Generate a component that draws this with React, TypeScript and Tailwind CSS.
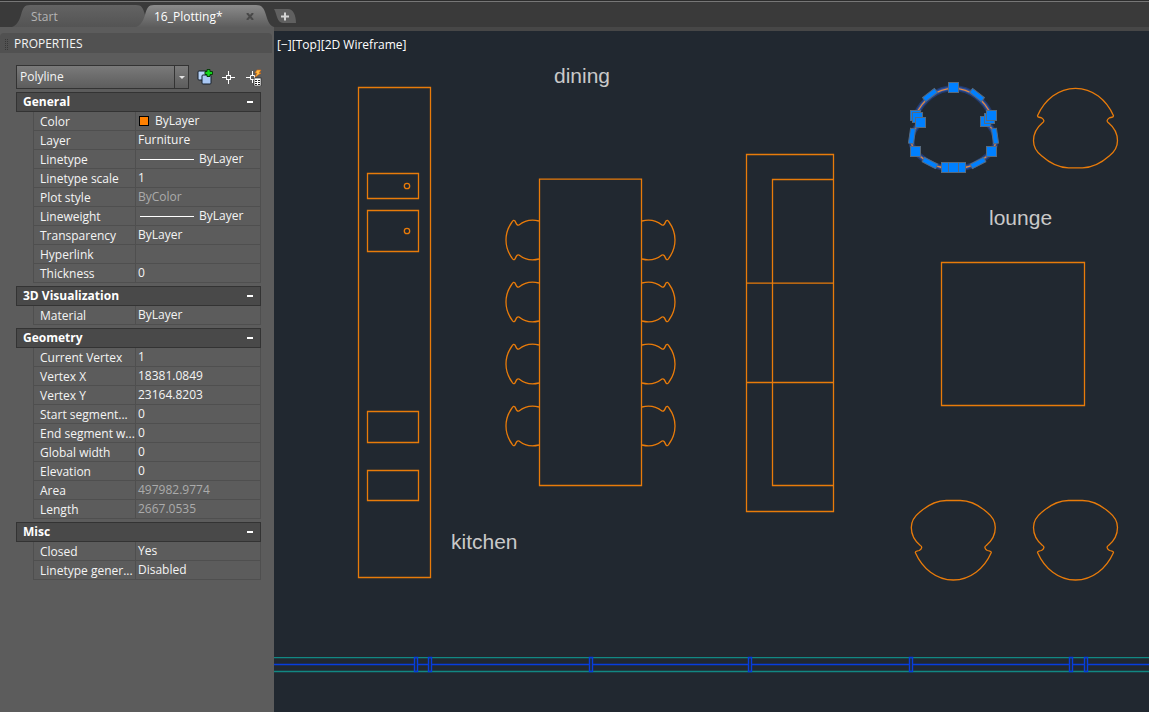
import React from "react";

type Row = { label: string; value: string; muted?: boolean; kind?: "swatch" | "line" };
type Group = { title: string; rows: Row[] };

const groups: Group[] = [
  {
    title: "General",
    rows: [
      { label: "Color", value: "ByLayer", kind: "swatch" },
      { label: "Layer", value: "Furniture" },
      { label: "Linetype", value: "ByLayer", kind: "line" },
      { label: "Linetype scale", value: "1" },
      { label: "Plot style", value: "ByColor", muted: true },
      { label: "Lineweight", value: "ByLayer", kind: "line" },
      { label: "Transparency", value: "ByLayer" },
      { label: "Hyperlink", value: "" },
      { label: "Thickness", value: "0" },
    ],
  },
  { title: "3D Visualization", rows: [{ label: "Material", value: "ByLayer" }] },
  {
    title: "Geometry",
    rows: [
      { label: "Current Vertex", value: "1" },
      { label: "Vertex X", value: "18381.0849" },
      { label: "Vertex Y", value: "23164.8203" },
      { label: "Start segment...", value: "0" },
      { label: "End segment w...", value: "0" },
      { label: "Global width", value: "0" },
      { label: "Elevation", value: "0" },
      { label: "Area", value: "497982.9774", muted: true },
      { label: "Length", value: "2667.0535", muted: true },
    ],
  },
  {
    title: "Misc",
    rows: [
      { label: "Closed", value: "Yes" },
      { label: "Linetype gener...", value: "Disabled" },
    ],
  },
];

function TabBar() {
  return (
    <header className="flex h-[27px] items-end border-t border-[#2c2c2c] bg-[#3a3a3a] shadow-[inset_0_1px_0_#777777]">
      <nav className="flex items-end pl-3" aria-label="Drawings">
        <div className="relative h-[23px] w-[132px]">
          <svg className="absolute inset-0" width="140" height="23" viewBox="0 0 140 23" aria-hidden="true">
            <defs>
              <linearGradient id="tabIdle" x1="0" y1="0" x2="0" y2="1">
                <stop offset="0" stopColor="#636363" />
                <stop offset="1" stopColor="#545454" />
              </linearGradient>
            </defs>
            <path d="M0 23C5 21 7 17 9 11C11 4 12 1 18 1H124C130 1 131 4 133 11C135 17 137 21 140 23Z" fill="url(#tabIdle)" />
          </svg>
          <a href="#start" className="relative flex h-full items-center pl-[19px] pt-[2px] text-[#b4b4b4]">Start</a>
        </div>
        <div className="relative h-[23px] w-[130px]">
          <svg className="absolute inset-0 overflow-visible" width="130" height="23" viewBox="0 0 130 23" aria-hidden="true">
            <defs>
              <linearGradient id="tabActive" x1="0" y1="0" x2="0" y2="1">
                <stop offset="0" stopColor="#8b8b8b" />
                <stop offset="1" stopColor="#5d5d5d" />
              </linearGradient>
            </defs>
            <path d="M-8 23C-3 21 -1 17 1 11C3 4 4 1 10 1H112C118 1 120 4 122 11C124 17 125 21 130 23Z" fill="url(#tabActive)" />
          </svg>
          <div className="relative flex h-full items-center pl-[10px] pr-4 pt-[2px] text-white">
            <a href="#plotting" className="flex-1">16_Plotting*</a>
            <button aria-label="Close tab" className="flex h-4 w-4 items-center justify-center">
              <svg width="8" height="7" viewBox="0 0 8 7"><path d="M1 0L7 7M7 0L1 7" stroke="#484848" strokeWidth="2" /></svg>
            </button>
          </div>
        </div>
      </nav>
      <button aria-label="New tab" className="mb-[3px]">
        <svg width="23" height="15" viewBox="0 0 23 15">
          <path d="M0 0H14C19 0 22 6 22 14H9C3 14 3 5 0 0Z" fill="#606060" />
          <path d="M7 7.500H15M11 3.500V11.500" stroke="#d4d4d4" strokeWidth="2" />
        </svg>
      </button>
    </header>
  );
}

function Toolbar() {
  return (
    <div className="flex h-6 items-center">
      <div className="relative flex h-6 w-[173px] shrink-0">
        <select
          aria-label="Object type"
          className="h-6 w-full appearance-none border border-[#333333] bg-linear-to-b from-[#7a7a7a] to-[#5d5d5d] pl-[3px] text-[#f4f4f4]"
        >
          <option>Polyline</option>
        </select>
        <svg className="pointer-events-none absolute right-0 top-0" width="15" height="24" viewBox="0 0 15 24" aria-hidden="true">
          <path d="M.5 0V24" stroke="#333333" />
          <path d="M5 11H11L8 14Z" fill="#e4e4e4" />
        </svg>
      </div>
      <button aria-label="Toggle PICKADD" className="ml-2 shrink-0">
        <svg width="16" height="16" viewBox="0 0 16 16">
          <rect x="1" y="2" width="9" height="9" rx="1" fill="#b8d4fa" stroke="#17202c" />
          <rect x="5" y="6" width="9" height="9" rx="1" fill="#a9c8f4" stroke="#17202c" />
          <path d="M10 .5H13V2.500H15.500V5.500H13V7.500H10V5.500H8V2.500H10Z" fill="#12d51d" stroke="#073e09" />
        </svg>
      </button>
      <button aria-label="Select objects" className="ml-2 shrink-0">
        <svg width="16" height="16" viewBox="0 0 16 16" fill="none" stroke="#ffffff" shapeRendering="crispEdges">
          <path d="M1 8.500H6M10 8.500H14M7.500 2V6M7.500 11V15" />
          <rect x="5.500" y="6.500" width="4" height="4" />
        </svg>
      </button>
      <button aria-label="Quick select" className="ml-2 shrink-0">
        <svg width="18" height="18" viewBox="0 0 18 18" fill="none">
          <path d="M1 9.500H6M7.500 3V7M7.500 12V15M5.500 7.500H9.500V11.500H5.500Z" stroke="#fff" />
          <path d="M12 2H16L14 5H16L10 9L12 5H10Z" fill="#ffbc45" stroke="#de6a0c" strokeWidth=".6" />
          <rect x="9" y="10" width="7" height="8" fill="#fff" stroke="#292929" strokeWidth=".7" />
          <path d="M10 12.500H12M13 12.500H15M10 14.500H12M13 14.500H15M10 16.500H12M13 16.500H15" stroke="#222" />
        </svg>
      </button>
    </div>
  );
}

function PropertyGroup({ group }: { group: Group }) {
  return (
    <section className="pb-[3px]">
      <h2>
        <button className="flex h-5 w-full items-center justify-between border border-[#333333] bg-[#494949] pl-[6px] pr-[7px] font-bold text-white">
          <span>{group.title}</span>
          <span className="h-[2px] w-[6px] bg-white" />
        </button>
      </h2>
      <table className="ml-[17px] w-[228px] table-fixed border-separate border-spacing-0">
        <tbody>
          {group.rows.map((row) => (
            <tr key={row.label}>
              <th scope="row" className="w-[102px] whitespace-nowrap border-b border-l border-[#4f4f4f] p-0 pl-[6px] text-left font-normal">
                <div className="flex h-[18px] items-center pt-[2px]">{row.label}</div>
              </th>
              <td className={row.muted ? "border-x border-b border-[#4f4f4f] p-0 pl-[2px] text-[#ababab]" : "border-x border-b border-[#4f4f4f] p-0 pl-[2px]"}>
                <div className="flex h-[18px] items-center">
                  {row.kind === "swatch" && <span className="ml-[1px] mr-[6px] h-[10px] w-[10px] border border-black bg-[#ff8000]" />}
                  {row.kind === "line" && <span className="ml-[2px] mr-[5px] h-px w-[54px] bg-white" />}
                  {row.value}
                </div>
              </td>
            </tr>
          ))}
        </tbody>
      </table>
    </section>
  );
}

function PropertiesPanel() {
  return (
    <aside className="w-[274px] shrink-0 bg-[#5c5c5c] pt-[6px] text-[#f4f4f4]">
      <div className="mr-[2px] flex h-5 items-center rounded-t bg-[#515151] pl-[5px] pt-[2px]">
        <svg width="3" height="11" viewBox="0 0 3 11" aria-hidden="true">
          <path d="M.5 0V11M2.500 0V11" stroke="#383838" strokeDasharray="1 1" />
        </svg>
        <h1 className="ml-[6px]">PROPERTIES</h1>
      </div>
      <div className="pl-4 pr-[13px] pt-3">
        <Toolbar />
        <div className="pt-[3px]">
          {groups.map((group) => <PropertyGroup key={group.title} group={group} />)}
        </div>
      </div>
    </aside>
  );
}

const loungeChair =
  "M0 -39.500C-17 -39.500 -31 -28 -38 -12C-38 -10 -37 -11 -34 -10C-31 -8 -31 -6 -33 -5C-39 0 -42 5 -42 13C-42 19 -39 24 -34 28C-25 36 -17 40 -7 40H7C17 40 25 36 34 28C39 24 42 19 42 13C42 5 39 0 33 -5C31 -6 31 -8 34 -10C37 -11 38 -10 38 -12C31 -28 17 -39.500 0 -39.500Z";
const diningChair =
  "M0 -19C-8 -21 -15 -19 -20 -15C-22 -14 -23 -17 -24 -19C-25 -20 -26 -20 -27 -18C-35 -7 -35 7 -27 18C-26 20 -25 20 -24 19C-23 17 -22 14 -20 15C-15 19 -8 21 0 19";

const grips = [
  [915.5, 115.5], [917.5, 117.5], [920.5, 122.5], [985.5, 121.5], [989.5, 118.5], [991.5, 115.5],
  [915.5, 151.5], [991.5, 151.5], [946.5, 167.5], [960.5, 167.5], [953.5, 167.5], [953.5, 87.5],
];
const midGrips = [
  [930, 95, -38], [977, 95, 38], [912, 136, 98], [995, 136, 82], [930, 163, 27], [978, 163, -27],
];

function Drawing() {
  return (
    <main className="min-w-0 flex-1 overflow-hidden bg-[#212830]">
      <svg className="h-auto w-full" viewBox="274 31 875 681" preserveAspectRatio="xMinYMin meet" role="img" aria-label="Furniture plan">
        <g fill="none" stroke="#e87b0a" strokeWidth="1.300">
          <path d="M358.500 87.500H430.500V577.500H358.500ZM367.500 173.500H418.500V198.500H367.500ZM367.500 210.500H418.500V251.500H367.500ZM367.500 411.500H418.500V442.500H367.500ZM367.500 470.500H418.500V500.500H367.500Z" />
          <circle cx="407" cy="186" r="2.700" />
          <circle cx="407" cy="231" r="2.700" />
          <path d="M539.500 179.200H641.500V485.500H539.500ZM746.500 154.500H833.500V511.500H746.500ZM833.500 179.500H772.500V485.500H833.500M746.500 283.200H833.500M746.500 382.500H833.500M941.500 262.500H1084.500V405.500H941.500Z" />
          {[240, 302, 364, 426].map((y) => (
            <g key={y}>
              <path d={diningChair} transform={`translate(539 ${y})`} />
              <path d={diningChair} transform={`translate(642 ${y}) scale(-1 1)`} />
            </g>
          ))}
          <path d={loungeChair} transform="translate(1075.500 127.800)" />
          <path d={loungeChair} transform="translate(953.300 540.500) scale(1 -1)" />
          <path d={loungeChair} transform="translate(1075.500 540.500) scale(1 -1)" />
        </g>
        <g fill="none">
          <path d={loungeChair} transform="translate(953.500 127.800)" stroke="#25489a" strokeOpacity=".55" strokeWidth="6" />
          <path d={loungeChair} transform="translate(953.500 127.800)" stroke="#2a50a4" strokeWidth="3.500" />
          <path d={loungeChair} transform="translate(953.500 127.800)" stroke="#e58b42" strokeWidth="1.200" />
        </g>
        <g fill="#0080ff" stroke="#586b7f">
          {midGrips.map(([x, y, angle]) => (
            <rect key={`${x}-${y}`} x="-7.500" y="-2.500" width="15" height="5" transform={`translate(${x} ${y}) rotate(${angle})`} />
          ))}
          {grips.map(([x, y]) => (
            <rect key={`${x}-${y}`} x={x - 5} y={y - 5} width="10" height="10" />
          ))}
        </g>
        <g fill="none" strokeWidth="1.400">
          <path d="M274 657.600H1149M274 671.500H1149" stroke="#128883" />
          <path d="M274 664.500H414M418 664.500H428M432 664.500H589M593 664.500H749M752 664.500H909M913 664.500H1069M1073 664.500H1084M1087 664.500H1149" stroke="#073dde" />
          <path d="M414.500 657.500V671.500H417.500V657.500ZM428.500 657.500V671.500H431.500V657.500ZM589.500 657.500V671.500H592.500V657.500ZM748.500 657.500V671.500H751.500V657.500ZM909.500 657.500V671.500H912.500V657.500ZM1069.500 657.500V671.500H1072.500V657.500ZM1084.500 657.500V671.500H1087.500V657.500Z" stroke="#073dde" />
        </g>
        <text x="277" y="49" fontSize="12" fill="#ffffff">[−][Top][2D Wireframe]</text>
        <g fill="#c9c9c9" fontSize="21" className="font-['Liberation_Sans',Arial,sans-serif]">
          <text x="554" y="83">dining</text>
          <text x="989" y="225">lounge</text>
          <text x="451" y="549">kitchen</text>
        </g>
      </svg>
    </main>
  );
}

export default function App() {
  return (
    <div className="flex min-h-screen flex-col bg-[#5c5c5c] font-['Open_Sans','Noto_Sans',sans-serif] text-[12px] leading-4">
      <TabBar />
      <div className="flex flex-1 bg-[#5c5c5c]">
        <PropertiesPanel />
        <div className="flex min-w-0 flex-1 flex-col border-t-4 border-[#474747]">
          <Drawing />
        </div>
      </div>
    </div>
  );
}
